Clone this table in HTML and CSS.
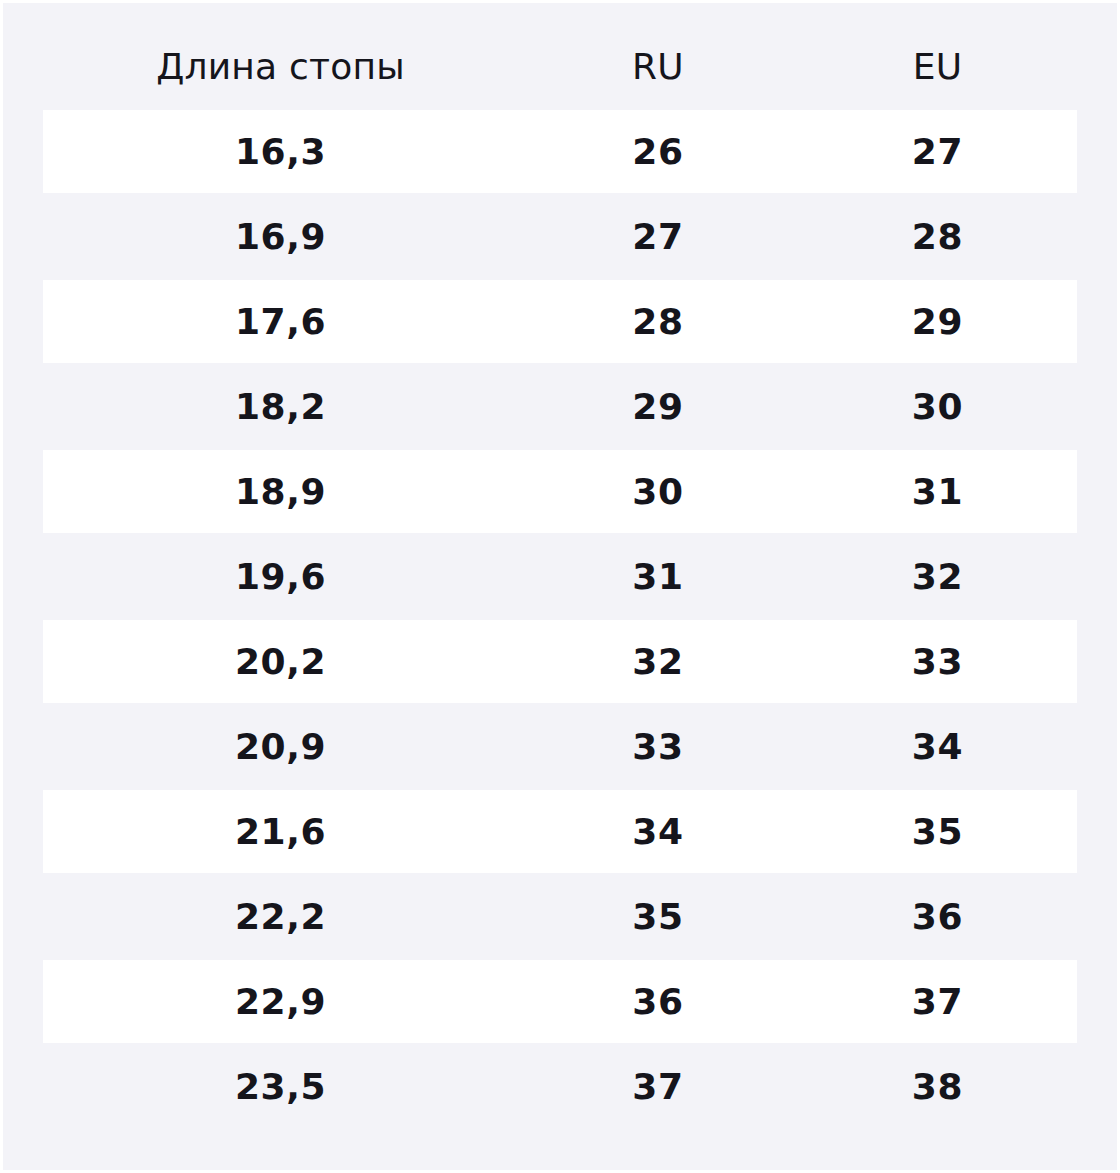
FILE: index.html
```html
<!DOCTYPE html>
<html lang="ru">
<head>
<meta charset="utf-8">
<title>Таблица размеров</title>
<link rel="stylesheet" href="styles.css">
</head>
<body>
<div class="card">
  <div class="size-table">
    <div class="row head"><div>Длина стопы</div><div>RU</div><div>EU</div></div>
    <div class="row light"><div>16,3</div><div>26</div><div>27</div></div>
    <div class="row dim"><div>16,9</div><div>27</div><div>28</div></div>
    <div class="row light"><div>17,6</div><div>28</div><div>29</div></div>
    <div class="row dim"><div>18,2</div><div>29</div><div>30</div></div>
    <div class="row light"><div>18,9</div><div>30</div><div>31</div></div>
    <div class="row dim"><div>19,6</div><div>31</div><div>32</div></div>
    <div class="row light"><div>20,2</div><div>32</div><div>33</div></div>
    <div class="row dim"><div>20,9</div><div>33</div><div>34</div></div>
    <div class="row light"><div>21,6</div><div>34</div><div>35</div></div>
    <div class="row dim"><div>22,2</div><div>35</div><div>36</div></div>
    <div class="row light"><div>22,9</div><div>36</div><div>37</div></div>
    <div class="row dim"><div>23,5</div><div>37</div><div>38</div></div>
  </div>
</div>
</body>
</html>
```

FILE: styles.css
```css
html, body {
  background: #ffffff;
}
body {
  margin: 3px;
  font-family: "DejaVu Sans", "Liberation Sans", sans-serif;
  color: #15151c;
}
.card {
  background: #f3f3f8;
  padding: 40px;
  height: 1167px;
  box-sizing: border-box;
}
.size-table {
  display: flex;
  flex-direction: column;
}
.row {
  display: grid;
  grid-template-columns: 475px 280px 279px;
  align-items: center;
  justify-items: center;
  font-size: 36px;
  line-height: 42px;
  font-weight: bold;
  letter-spacing: 0.6px;
}
.row.head {
  height: 67px;
  box-sizing: border-box;
  align-items: start;
  padding-top: 3px;
  font-weight: normal;
  letter-spacing: 0.2px;
}
.row.light {
  height: 83px;
  background: #ffffff;
}
.row.dim {
  height: 87px;
}
```
